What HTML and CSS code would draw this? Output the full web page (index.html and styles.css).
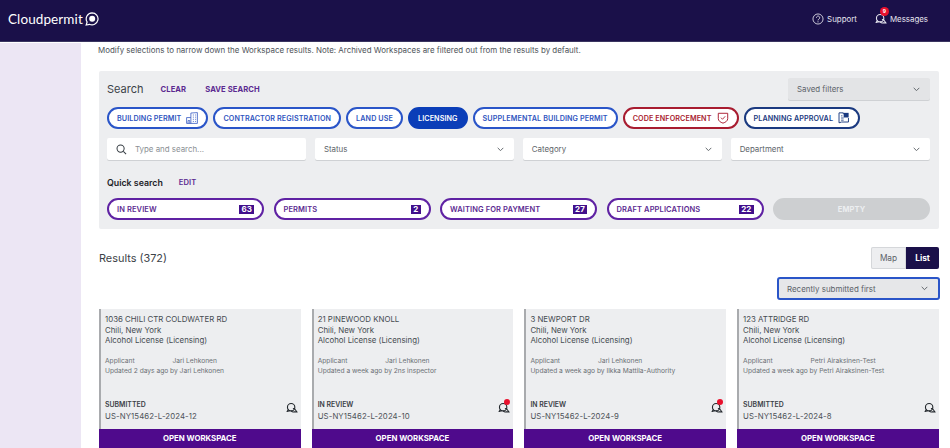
FILE: index.html
```html
<!DOCTYPE html>
<html lang="en">
<head>
<meta charset="utf-8">
<title>Cloudpermit</title>
<link rel="stylesheet" href="styles.css">
</head>
<body>
<svg class="defs" width="0" height="0" aria-hidden="true">
  <symbol id="chat" viewBox="0 0 14 14">
    <circle cx="6" cy="6" r="4.3" fill="none" stroke="currentColor" stroke-width="1.3"/>
    <path d="M2.6 9 1.2 11.2 4.4 10.3M8.5 7.6a2.6 2.6 0 0 1 2.6 1.8l1.8 2.4-3.2-.5a3 3 0 0 1-3.4-.7" fill="none" stroke="currentColor" stroke-width="1.2" stroke-linejoin="round" stroke-linecap="round"/>
  </symbol>
  <symbol id="chev" viewBox="0 0 10 6">
    <path d="M1 1l4 4 4-4" fill="none" stroke="currentColor" stroke-width="1.2"/>
  </symbol>
</svg>
<header class="topbar">
  <div class="brand">
    <span class="brand-name">Cloudpermit</span>
    <svg class="brand-mark" viewBox="0 0 14 14" aria-hidden="true">
      <path d="M7 .9a6 6 0 1 1-2.6 11.4L1.2 13l.9-3A6 6 0 0 1 7 .9z" fill="none" stroke="#fff" stroke-width="1.2"/>
      <circle cx="7.2" cy="6.8" r="3" fill="#fff"/>
    </svg>
  </div>
  <nav class="top-nav">
    <a class="top-link">
      <svg class="top-icon" viewBox="0 0 14 14" aria-hidden="true">
        <circle cx="7" cy="7" r="5.9" fill="none" stroke="currentColor" stroke-width="1"/>
        <path d="M5.2 5.5a1.9 1.9 0 1 1 2.9 1.6c-.7.4-1.1.8-1.1 1.5" fill="none" stroke="currentColor" stroke-width="1"/>
        <circle cx="7" cy="10.3" r=".7" fill="currentColor"/>
      </svg>
      Support
    </a>
    <a class="top-link msgs">
      <span class="icon-wrap">
        <svg class="top-icon"><use href="#chat"/></svg>
        <span class="badge">9</span>
      </span>
      Messages
    </a>
  </nav>
</header>
<div class="layout">
  <aside class="sidebar"></aside>
  <main class="content">
    <p class="intro">Modify selections to narrow down the Workspace results. Note: Archived Workspaces are filtered out from the results by default.</p>
    <section class="panel">
      <div class="search-head">
        <h2 class="search-title">Search</h2>
        <a class="action">CLEAR</a>
        <a class="action">SAVE SEARCH</a>
        <div class="select saved"><span>Saved filters</span><svg class="chev"><use href="#chev"/></svg></div>
      </div>
      <div class="pills">
        <span class="pill blue">BUILDING PERMIT
          <svg class="pill-icon" viewBox="0 0 14 14" aria-hidden="true"><path d="M.7 13.3V6.5h5V1.2l7.6-.5v12.6zM5.7 6.5v6.8M2.4 13.3V10h2v3.300M8 3.500h1.200M10.600 3.500h1.200M8 6h1.200M10.600 6h1.200M8 8.500h1.200M10.600 8.500h1.200M8 11h1.200M10.600 11h1.200" fill="none" stroke="currentColor" stroke-width=".9"/></svg>
        </span>
        <span class="pill blue">CONTRACTOR REGISTRATION</span>
        <span class="pill blue">LAND USE</span>
        <span class="pill blue active">LICENSING</span>
        <span class="pill blue">SUPPLEMENTAL BUILDING PERMIT</span>
        <span class="pill red">CODE ENFORCEMENT
          <svg class="pill-icon" viewBox="0 0 14 14" aria-hidden="true"><path d="M1.5 1.5h11v6.2c0 2.6-2.4 4.3-5.5 5.3-3.1-1-5.5-2.7-5.5-5.3z" fill="none" stroke="currentColor" stroke-width="1.1"/><path d="M4.6 6.6 6.4 8.5 9.6 5" fill="none" stroke="currentColor" stroke-width="1"/></svg>
        </span>
        <span class="pill navy">PLANNING APPROVAL
          <svg class="pill-icon" viewBox="0 0 14 14" aria-hidden="true"><path d="M1.2 1h5v1.500M1.200 1v11.600l3-.9h8V7" fill="none" stroke="currentColor" stroke-width="1.1"/><rect x="6.6" y="1" width="5.8" height="5.4" fill="currentColor"/><path d="M3.6 4.5h1.6M3.6 7h3M3.6 9.500h3" stroke="currentColor" stroke-width="1"/></svg>
        </span>
      </div>
      <div class="fields">
        <div class="select search-field">
          <svg class="search-icon" viewBox="0 0 12 12" aria-hidden="true"><circle cx="5" cy="5" r="3.9" fill="none" stroke="currentColor" stroke-width="1.1"/><path d="M8 8l3 3" stroke="currentColor" stroke-width="1.1"/></svg>
          <span class="placeholder">Type and search...</span>
        </div>
        <div class="select"><span>Status</span><svg class="chev"><use href="#chev"/></svg></div>
        <div class="select"><span>Category</span><svg class="chev"><use href="#chev"/></svg></div>
        <div class="select"><span>Department</span><svg class="chev"><use href="#chev"/></svg></div>
      </div>
      <div class="quick-head">
        <h3 class="quick-title">Quick search</h3>
        <a class="action small">EDIT</a>
      </div>
      <div class="quick-grid">
        <span class="qpill">IN REVIEW <b class="count">63</b></span>
        <span class="qpill">PERMITS <b class="count">2</b></span>
        <span class="qpill">WAITING FOR PAYMENT <b class="count">27</b></span>
        <span class="qpill">DRAFT APPLICATIONS <b class="count">22</b></span>
        <span class="qpill empty">EMPTY</span>
      </div>
    </section>
    <section class="results-head">
      <h2 class="results-title">Results (372)</h2>
      <div class="results-tools">
        <div class="toggle"><span class="tog">Map</span><span class="tog on">List</span></div>
        <div class="sort"><span>Recently submitted first</span><svg class="chev"><use href="#chev"/></svg></div>
      </div>
    </section>
    <section class="cards">
      <article class="card">
        <div class="card-body">
          <div class="addr">1036 CHILI CTR COLDWATER RD</div>
          <div class="addr">Chili, New York</div>
          <div class="addr type">Alcohol License (Licensing)</div>
          <div class="meta applicant"><span class="label">Applicant</span><span>Jari Lehkonen</span></div>
          <div class="meta">Updated 2 days ago by Jari Lehkonen</div>
          <div class="foot">
            <div><div class="status">SUBMITTED</div><div class="ref">US-NY15462-L-2024-12</div></div>
            <span class="card-chat"><svg class="chat-icon"><use href="#chat"/></svg></span>
          </div>
        </div>
        <a class="open">OPEN WORKSPACE</a>
      </article>
      <article class="card">
        <div class="card-body">
          <div class="addr">21 PINEWOOD KNOLL</div>
          <div class="addr">Chili, New York</div>
          <div class="addr type">Alcohol License (Licensing)</div>
          <div class="meta applicant"><span class="label">Applicant</span><span>Jari Lehkonen</span></div>
          <div class="meta">Updated a week ago by 2ns inspector</div>
          <div class="foot">
            <div><div class="status">IN REVIEW</div><div class="ref">US-NY15462-L-2024-10</div></div>
            <span class="card-chat unread"><svg class="chat-icon"><use href="#chat"/></svg></span>
          </div>
        </div>
        <a class="open">OPEN WORKSPACE</a>
      </article>
      <article class="card">
        <div class="card-body">
          <div class="addr">3 NEWPORT DR</div>
          <div class="addr">Chili, New York</div>
          <div class="addr type">Alcohol License (Licensing)</div>
          <div class="meta applicant"><span class="label">Applicant</span><span>Jari Lehkonen</span></div>
          <div class="meta">Updated a week ago by Ilkka Mattila-Authority</div>
          <div class="foot">
            <div><div class="status">IN REVIEW</div><div class="ref">US-NY15462-L-2024-9</div></div>
            <span class="card-chat unread"><svg class="chat-icon"><use href="#chat"/></svg></span>
          </div>
        </div>
        <a class="open">OPEN WORKSPACE</a>
      </article>
      <article class="card">
        <div class="card-body">
          <div class="addr">123 ATTRIDGE RD</div>
          <div class="addr">Chili, New York</div>
          <div class="addr type">Alcohol License (Licensing)</div>
          <div class="meta applicant"><span class="label">Applicant</span><span>Petri Airaksinen-Test</span></div>
          <div class="meta">Updated a week ago by Petri Airaksinen-Test</div>
          <div class="foot">
            <div><div class="status">SUBMITTED</div><div class="ref">US-NY15462-L-2024-8</div></div>
            <span class="card-chat"><svg class="chat-icon"><use href="#chat"/></svg></span>
          </div>
        </div>
        <a class="open">OPEN WORKSPACE</a>
      </article>
    </section>
  </main>
</div>
</body>
</html>
```
FILE: styles.css
```css
* { box-sizing: border-box; }
html, body { margin: 0; height: 448px; overflow: hidden; }
body { font-family: Inter, "Liberation Sans", sans-serif; color: #3c4248; background: #fff; }
h2, h3, p { margin: 0; font-weight: 400; }
.defs { position: absolute; }

.topbar { height: 42px; background: #1a1049; border-bottom: 1px solid #3a3560; display: flex; align-items: center; justify-content: space-between; padding: 0 22px 3px 8px; color: #fff; }
.brand { display: flex; align-items: center; gap: 2px; }
.brand-name { font-family: Lato, "Open Sans", sans-serif; font-size: 13.5px; letter-spacing: 0.1px; }
.brand-mark { width: 14px; height: 14px; }
.top-nav { display: flex; gap: 18px; align-items: center; }
.top-link { display: flex; align-items: center; gap: 3px; font-size: 7.9px; color: #e6e5ee; }
.top-icon { width: 12px; height: 12px; display: block; }
.icon-wrap { position: relative; display: block; }
.badge { position: absolute; top: -6px; left: 5px; width: 9px; height: 9px; border-radius: 50%; background: #e8112d; color: #fff; font-size: 5px; font-weight: 700; line-height: 9px; text-align: center; }

.layout { display: flex; height: 406px; padding-top: 1px; }
.sidebar { width: 81px; background: #ece6f4; flex: none; }
.content { flex: 1; padding: 1px 11px 0 17px; min-width: 0; }
.intro { font-size: 7.95px; line-height: 12px; margin-bottom: 15px; color: #4d5359; }

.panel { margin-left: 1px; background: #edeef0; height: 158px; padding: 7px 9px 0 8px; border-radius: 2px; }
.search-head { display: flex; align-items: center; height: 22px; }
.search-title { font-size: 11px; color: #3c4248; margin-right: 17px; }
.action { font-size: 7.6px; font-weight: 700; color: #5b2a91; margin-right: 19px; letter-spacing: .1px; }
.select { background: #fff; height: 22px; display: flex; align-items: center; justify-content: space-between; padding: 0 9px; font-size: 7.9px; color: #5c6369; box-shadow: 0 1px 0 #cfd1d4; border-radius: 2px; }
.select.saved { margin-left: auto; width: 142px; background: #e3e4e6; }
.chev { width: 7px; height: 4.5px; color: #4a5056; flex: none; margin-right: 1px; }
.pills { display: flex; gap: 5px; margin-top: 7px; height: 22px; }
.pill { height: 22px; border-radius: 11px; border: 2px solid #2a55c8; background: #fff; color: #2f55c0; font-size: 7.2px; font-weight: 600; display: flex; align-items: center; gap: 5px; padding: 0 8px; white-space: nowrap; letter-spacing: .1px; }
.pill.active { background: #0b3eb8; border-color: #0b3eb8; color: #fff; }
.pill.red { border-color: #a81c30; color: #a81c30; }
.pill.navy { border-color: #1b3a80; color: #1b3a80; }
.pill-icon { width: 12px; height: 12px; flex: none; }
.fields { display: grid; grid-template-columns: repeat(4, 1fr); gap: 8.5px; margin-top: 9px; }
.search-field { justify-content: flex-start; gap: 8px; }
.search-icon { width: 11px; height: 11px; color: #333a40; }
.placeholder { color: #8a8f94; }
.quick-head { display: flex; align-items: center; margin-top: 16px; height: 12px; }
.quick-title { font-size: 8.8px; font-weight: 600; color: #1e2328; margin-right: 16px; }
.action.small { margin: 0; font-weight: 600; }
.quick-grid { display: grid; grid-template-columns: repeat(5, 1fr); gap: 9.5px; margin-top: 10px; }
.qpill { height: 22px; border-radius: 11px; background: #fff; border: 2px solid #5f22a3; color: #5b2a91; font-size: 7.5px; font-weight: 600; display: flex; align-items: center; justify-content: space-between; padding: 0 8px; white-space: nowrap; letter-spacing: .1px; }
.qpill.empty { background: #cdcfd1; border-color: #cdcfd1; color: #eceef0; justify-content: center; font-weight: 700; }
.count { background: #42108c; color: #fff; font-size: 8px; font-weight: 700; padding: 0 2px; line-height: 9px; min-width: 9px; text-align: center; }

.results-head { display: flex; justify-content: space-between; align-items: flex-start; margin-left: 1px; margin-top: 18px; height: 62px; }
.results-title { font-size: 10.9px; line-height: 22px; color: #3c4248; }
.results-tools { display: flex; flex-direction: column; align-items: flex-end; gap: 8px; }
.toggle { display: flex; height: 22px; }
.tog { background: #edeef0; width: 35px; display: flex; align-items: center; justify-content: center; font-size: 8.3px; color: #5c6369; box-shadow: inset 0 0 0 1px #d5d7da; border-radius: 2px 0 0 2px; }
.tog.on { background: #1a1049; color: #fff; font-weight: 700; width: 33px; box-shadow: none; border-radius: 0 2px 2px 0; }
.sort { width: 163px; height: 23px; margin-right: -1px; background: #e6e7e9; border: 2px solid #2a55c8; border-radius: 3px; display: flex; align-items: center; justify-content: space-between; padding: 0 9px 0 8px; font-size: 7.95px; color: #5c6369; }

.cards { display: grid; grid-template-columns: repeat(4, 201.5px); column-gap: 11.2px; margin-left: 1px; }
.card { background: #edeef0; height: 139px; display: flex; flex-direction: column; }
.card-body { flex: 1; border-left: 2px solid #a9abae; padding: 5px 7px 0 4px; position: relative; display: flex; flex-direction: column; }
.addr { font-size: 7.85px; line-height: 10.5px; color: #454b51; }
.addr.type { margin-bottom: 10px; }
.meta { font-size: 6.65px; line-height: 10.5px; color: #6b7075; }
.applicant { display: flex; }
.label { width: 67.5px; }
.foot { display: flex; justify-content: space-between; align-items: flex-end; margin-top: auto; padding-bottom: 7px; }
.status { font-size: 6.9px; font-weight: 600; color: #3a4046; line-height: 10px; margin-bottom: 1px; }
.ref { font-size: 7.8px; line-height: 11px; color: #4d5359; letter-spacing: .1px; }
.card-chat { position: relative; display: block; margin-bottom: 8px; margin-right: -4px; }
.chat-icon { width: 12px; height: 12px; display: block; color: #22272c; }
.unread::after { content: ""; position: absolute; top: -3px; right: 0; width: 6px; height: 6px; border-radius: 50%; background: #e8112d; }
.open { display: block; height: 19px; background: #4f0a8c; color: #fff; font-size: 7.8px; font-weight: 700; text-align: center; line-height: 18px; flex: none; }
```
